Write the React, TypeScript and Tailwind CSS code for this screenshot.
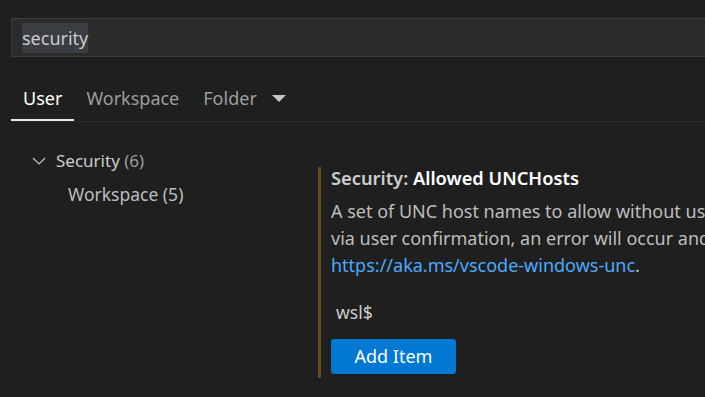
const font = { fontFamily: '"Segoe UI", "Noto Sans", "Open Sans", sans-serif' };

export default function App() {
  return (
    <div className="w-[705px] h-[397px] overflow-hidden bg-[#1f1f1f] text-[#cccccc]" style={font}>
      {/* Search box */}
      <div className="pt-[18px] pl-[11px]">
        <div className="w-[720px] h-[39px] border border-[#3c3c3c] bg-[#2b2b2b] flex items-center pl-[10px]">
          <span className="bg-[#3a3d41] text-[#cccccc] text-[18px] leading-[30px]">security</span>
        </div>
      </div>

      {/* Tabs */}
      <div className="mt-[25px] ml-[11px] flex border-b border-[#2b2b2b] h-[40px]">
        <div className="px-3 h-[39px] text-[18px] leading-[32px] text-white border-b-2 border-[#e7e7e7]">User</div>
        <div className="px-3 h-[39px] text-[18px] leading-[32px] text-[#9d9d9d]">Workspace</div>
        <div className="pl-3 h-[32px] text-[18px] leading-[32px] text-[#9d9d9d] flex items-center gap-[15px]">
          Folder
          <svg width="14" height="7" viewBox="0 0 14 7">
            <path d="M0 0 L14 0 L7 7 Z" fill="#c5c5c5" />
          </svg>
        </div>
      </div>

      {/* Body */}
      <div className="flex">
        <div className="w-[276px] shrink-0 pt-[28px]">
          <div className="flex items-center h-[22px] pl-[32px]">
            <svg width="14" height="8" viewBox="0 0 14 8" fill="none">
              <path d="M1 1 L7 7 L13 1" stroke="#c5c5c5" strokeWidth="1.2" />
            </svg>
            <span className="ml-[10px] text-[17px]">
              Security <span className="text-[#9d9d9d]">(6)</span>
            </span>
          </div>
          <div className="h-[22px] mt-[11px] flex items-center pl-[68px] text-[17.5px] text-[#bdbdbd]">
            Workspace (5)
          </div>
        </div>
        <div className="mt-[22px] w-px h-[260px] bg-[#2b2b2b]" />
        <div className="self-start ml-[42px] mt-[45px] border-l-[3px] border-[#634c1c] pl-[10px] pb-[4px] w-[500px]">
          <div className="text-[18.3px] font-semibold leading-[22px] whitespace-nowrap">
            <span className="text-[#cccccc]">Security: </span>
            <span className="text-white">Allowed UNCHosts</span>
          </div>
          <div className="mt-[9px] text-[18px] leading-[27px] text-[#bdbdbd] whitespace-nowrap">
            <div>A set of UNC host names to allow without user confirmation. If a UNC host is</div>
            <div>via user confirmation, an error will occur and the operation will fail. See</div>
            <div>
              <span className="text-[#4daafc]">https://aka.ms/vscode-windows-unc</span>.
            </div>
          </div>
          <div className="mt-[22px] pl-[5px] text-[17.5px] leading-[22px] text-[#cccccc]">wsl$</div>
          <button className="mt-[16px] w-[125px] h-[35px] bg-[#0078d4] rounded-[3px] text-white text-[18px]">
            Add Item
          </button>
        </div>
      </div>
    </div>
  );
}
